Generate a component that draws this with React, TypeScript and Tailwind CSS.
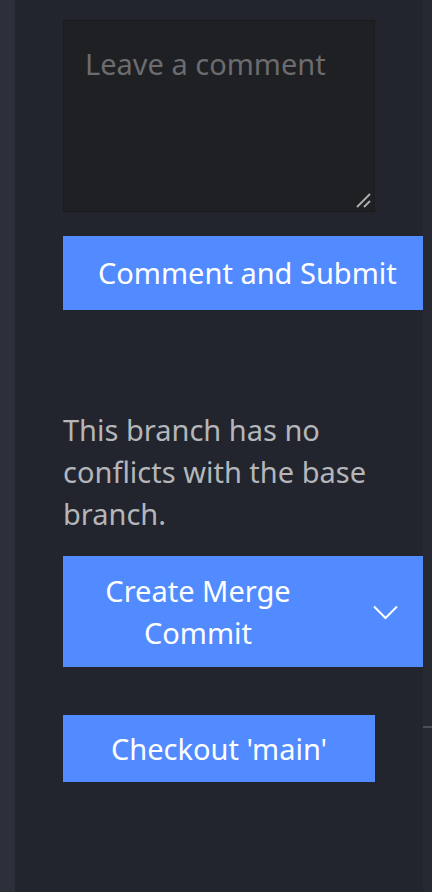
export default function App() {
  return (
    <div
      className="flex h-[892px] w-[432px] overflow-hidden bg-[#22252d]"
      style={{ fontFamily: '"Noto Sans", "Open Sans", sans-serif' }}
    >
      {/* Left gutter */}
      <div className="w-[15px] shrink-0 bg-[#2c303a]" />

      {/* Main panel */}
      <div className="flex w-[408px] shrink-0 flex-col overflow-hidden pl-[48px] pt-[20px]">
        <div className="relative h-[192px] w-[312px]">
          <textarea
            placeholder="Leave a comment"
            className="h-full w-full resize-none border border-[#1a1b1e] bg-[#1f2024] px-[21px] py-[22px] text-[29px] leading-[42px] text-gray-300 outline-none placeholder:text-[#6b6c6f]"
          />
          {/* Resize grip */}
          <svg
            className="pointer-events-none absolute bottom-[4px] right-[4px] h-[15px] w-[15px]"
            viewBox="0 0 15 15"
          >
            <path d="M1 14L14 1" stroke="#b0b0b0" strokeWidth={1.8} />
            <path d="M8 14L14 8" stroke="#b0b0b0" strokeWidth={1.8} />
          </svg>
        </div>

        <button className="mt-[24px] flex h-[74px] w-[360px] shrink-0 items-center bg-[#528bff] pl-[35px] text-left text-[29px] whitespace-nowrap text-white">
          Comment and Submit
        </button>

        <p className="mt-[99px] w-[312px] text-[29px] leading-[42px] text-[#b4b6ba]">
          This branch has no conflicts with the base branch.
        </p>

        <button className="mt-[21px] flex h-[111px] w-[360px] shrink-0 items-center bg-[#528bff] text-white">
          <span className="w-[270px] text-center text-[29px] leading-[42px]">
            Create Merge
            <br />
            Commit
          </span>
          <span className="flex flex-1 justify-center pl-[14px] pt-[2px]">
            <svg width="25" height="15" viewBox="0 0 25 15" fill="none">
              <path d="M1 1.5L12.5 13L24 1.5" stroke="white" strokeWidth={2} />
            </svg>
          </span>
        </button>

        <button className="mt-[48px] flex h-[67px] w-[312px] shrink-0 items-center justify-center bg-[#528bff] text-[29px] text-white">
          Checkout 'main'
        </button>
      </div>

      {/* Right strip */}
      <div className="flex w-[9px] shrink-0 flex-col bg-[#262932]">
        <div className="mt-[726px] h-[2px] w-full bg-[#4b4e56]" />
      </div>
    </div>
  );
}
